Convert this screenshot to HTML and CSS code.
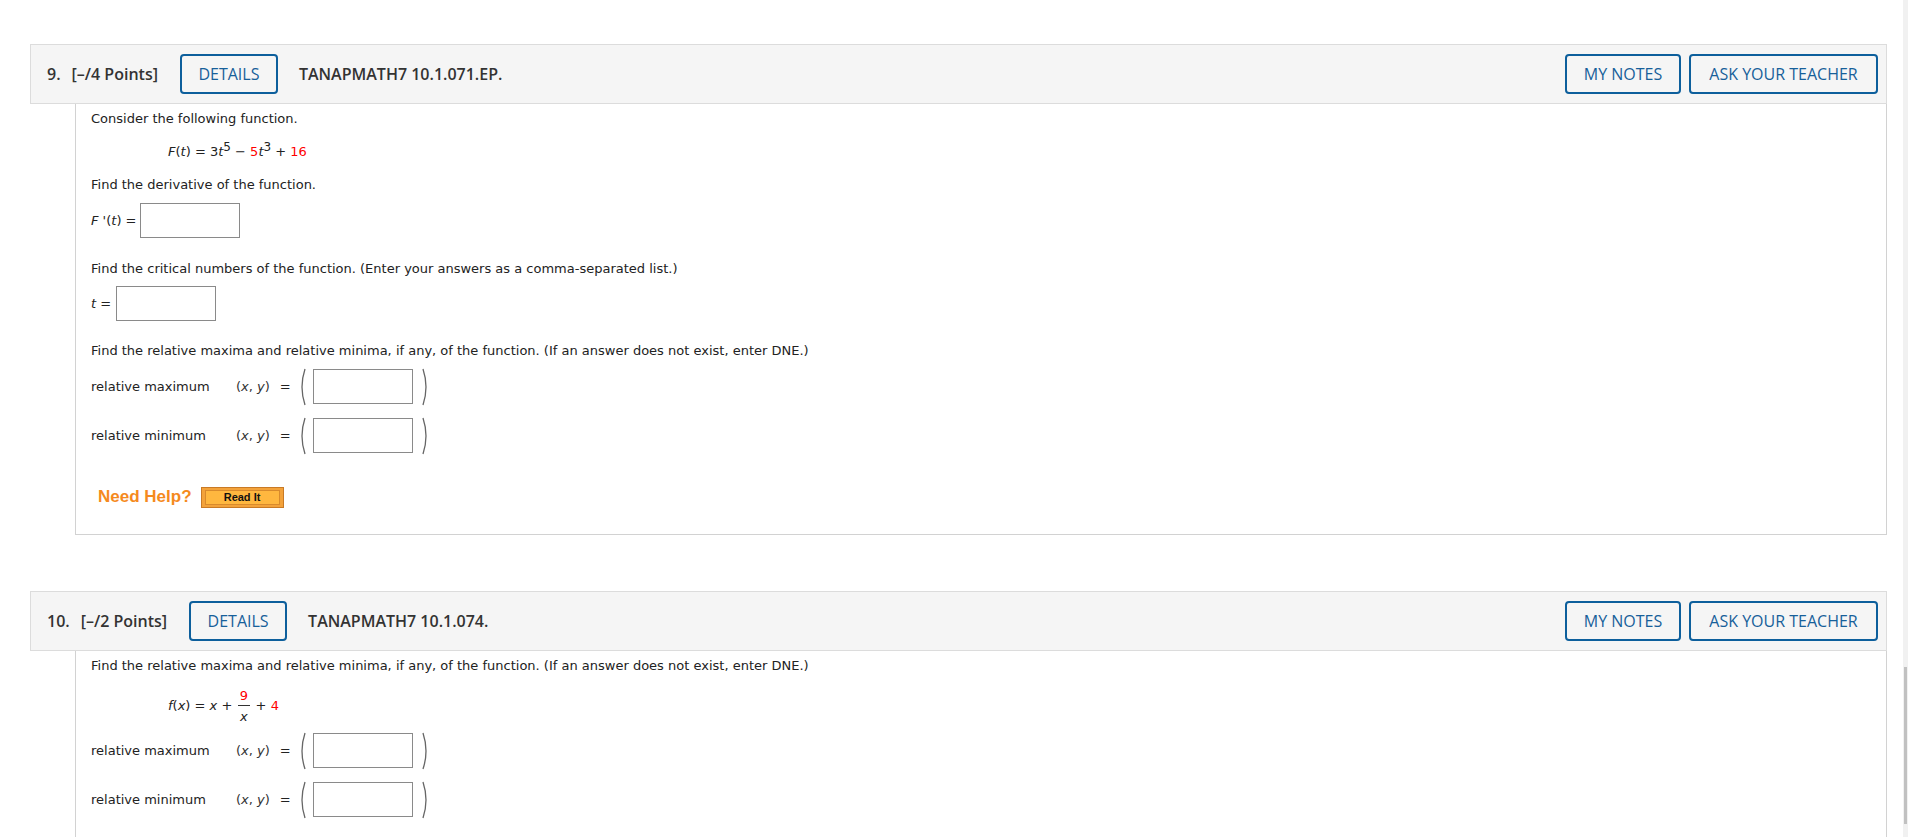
FILE: index.html
```html
<!DOCTYPE html>
<html>
<head>
<meta charset="utf-8">
<title>Questions</title>
<link rel="stylesheet" href="styles.css">
</head>
<body>
<div class="page">
  <section class="question">
    <div class="qhead">
      <span class="qnum">9.</span>
      <span class="qpts">[–/4 Points]</span>
      <button class="btn btn-details">DETAILS</button>
      <span class="qcode">TANAPMATH7 10.1.071.EP.</span>
      <span class="spacer"></span>
      <button class="btn btn-notes">MY NOTES</button>
      <button class="btn btn-ask">ASK YOUR TEACHER</button>
    </div>
    <div class="qbody">
      <p class="txt first">Consider the following function.</p>
      <div class="formula"><i>F</i>(<i>t</i>) = 3<i>t</i><sup>5</sup> − <span class="red">5</span><i>t</i><sup>3</sup> + <span class="red">16</span></div>
      <p class="txt gap13">Find the derivative of the function.</p>
      <div class="ans gap8"><span class="lbl lbl-fp"><i>F</i> '(<i>t</i>) =</span><span class="box"></span></div>
      <p class="txt gap21">Find the critical numbers of the function. (Enter your answers as a comma-separated list.)</p>
      <div class="ans gap7"><span class="lbl lbl-t"><i>t</i> =</span><span class="box"></span></div>
      <p class="txt gap20">Find the relative maxima and relative minima, if any, of the function. (If an answer does not exist, enter DNE.)</p>
      <div class="pair gap8">
        <span class="plabel">relative maximum</span>
        <span class="xy">(<i>x</i>, <i>y</i>)</span><span class="eq">=</span>
        <svg class="paren lp" viewBox="0 0 9 38"><path d="M7 1 Q1 19 7 37"/></svg>
        <span class="box"></span>
        <svg class="paren rp" viewBox="0 0 9 38"><path d="M2 1 Q8 19 2 37"/></svg>
      </div>
      <div class="pair gap14">
        <span class="plabel">relative minimum</span>
        <span class="xy">(<i>x</i>, <i>y</i>)</span><span class="eq">=</span>
        <svg class="paren lp" viewBox="0 0 9 38"><path d="M7 1 Q1 19 7 37"/></svg>
        <span class="box"></span>
        <svg class="paren rp" viewBox="0 0 9 38"><path d="M2 1 Q8 19 2 37"/></svg>
      </div>
      <div class="help">
        <span class="need">Need Help?</span>
        <span class="readit"><span class="readit-in">Read It</span></span>
      </div>
    </div>
  </section>

  <section class="question">
    <div class="qhead">
      <span class="qnum">10.</span>
      <span class="qpts">[–/2 Points]</span>
      <button class="btn btn-details">DETAILS</button>
      <span class="qcode">TANAPMATH7 10.1.074.</span>
      <span class="spacer"></span>
      <button class="btn btn-notes">MY NOTES</button>
      <button class="btn btn-ask">ASK YOUR TEACHER</button>
    </div>
    <div class="qbody">
      <p class="txt first">Find the relative maxima and relative minima, if any, of the function. (If an answer does not exist, enter DNE.)</p>
      <div class="formula fformula">
        <span class="seg"><i>f</i>(<i>x</i>) = <i>x</i> + </span>
        <span class="frac"><span class="num red">9</span><span class="bar"></span><span class="den"><i>x</i></span></span>
        <span class="seg"> + <span class="red">4</span></span>
      </div>
      <div class="pair gap10">
        <span class="plabel">relative maximum</span>
        <span class="xy">(<i>x</i>, <i>y</i>)</span><span class="eq">=</span>
        <svg class="paren lp" viewBox="0 0 9 38"><path d="M7 1 Q1 19 7 37"/></svg>
        <span class="box"></span>
        <svg class="paren rp" viewBox="0 0 9 38"><path d="M2 1 Q8 19 2 37"/></svg>
      </div>
      <div class="pair gap14">
        <span class="plabel">relative minimum</span>
        <span class="xy">(<i>x</i>, <i>y</i>)</span><span class="eq">=</span>
        <svg class="paren lp" viewBox="0 0 9 38"><path d="M7 1 Q1 19 7 37"/></svg>
        <span class="box"></span>
        <svg class="paren rp" viewBox="0 0 9 38"><path d="M2 1 Q8 19 2 37"/></svg>
      </div>
      <div class="tail"></div>
    </div>
  </section>
</div>
<div class="scrollbar"><div class="thumb"></div></div>
</body>
</html>
```

FILE: styles.css
```css
* { box-sizing: border-box; }

html, body {
  margin: 0;
  padding: 0;
  background: #fff;
  overflow: hidden;
}

body {
  font-family: "DejaVu Sans", Verdana, sans-serif;
  font-size: 13px;
  color: #222;
}

.page {
  padding: 44px 21px 0 30px;
}

.question + .question {
  margin-top: 56px;
}

/* ---------- header ---------- */
.qhead {
  display: flex;
  align-items: center;
  height: 60px;
  padding: 0 8px 0 16px;
  background: #f5f5f5;
  border: 1px solid #dcdcdc;
  font-family: "Open Sans", sans-serif;
  font-weight: 600;
  font-size: 16px;
  color: #333;
}

.qnum { margin-right: 11px; }
.qpts { margin-right: 22px; }
.qcode { margin-left: 21px; }
.spacer { flex: 1; }

.btn {
  height: 40px;
  padding: 0;
  background: transparent;
  border: 2px solid #0d5f9c;
  border-radius: 4px;
  color: #17609a;
  font-family: "Open Sans", sans-serif;
  font-size: 16px;
  font-weight: 400;
  text-align: center;
}
.btn-details { width: 98px; }
.btn-notes { width: 116px; }
.btn-ask { width: 189px; margin-left: 8px; }

/* ---------- body ---------- */
.qbody {
  margin-left: 45px;
  border: 1px solid #d2d2d2;
  border-top: none;
  padding: 5px 16px 26px 15px;
}

.txt {
  margin: 0;
  line-height: 20px;
}
.gap7 { margin-top: 7px; }
.gap8 { margin-top: 8px; }
.gap10 { margin-top: 10px; }
.gap13 { margin-top: 13px; }
.gap14 { margin-top: 14px; }
.gap20 { margin-top: 20px; }
.gap21 { margin-top: 21px; }

.red { color: #f00; }

.formula {
  margin: 13px 0 0 77px;
  line-height: 20px;
}
.formula sup {
  font-size: 12px;
  line-height: 0;
  vertical-align: 5px;
}

.fformula {
  display: flex;
  align-items: center;
  height: 35px;
  margin-top: 12px;
}
.seg { white-space: pre; }
.frac {
  display: flex;
  flex-direction: column;
  align-items: center;
  width: 13px;
  margin: 0 1px;
}
.num, .den {
  line-height: 15px;
  height: 15px;
}
.bar {
  width: 12px;
  height: 1px;
  background: #333;
  margin: 2px 0 3px;
}

.ans {
  display: flex;
  align-items: center;
  height: 35px;
}
.lbl { white-space: nowrap; }
.lbl-fp { width: 49px; }
.lbl-t { width: 25px; }

.box {
  display: block;
  width: 100px;
  height: 35px;
  border: 1px solid #8a8a8a;
  background: #fff;
}

.pair {
  display: flex;
  align-items: center;
  height: 35px;
}
.plabel { width: 145px; }
.xy { color: #333; }
.eq { margin-left: 10px; }
.paren {
  width: 9px;
  height: 38px;
  flex: none;
}
.paren path {
  fill: none;
  stroke: #666;
  stroke-width: 1.3;
}
.lp { margin: 0 6px 0 7px; }
.rp { margin-left: 8px; }

/* ---------- help ---------- */
.help {
  display: flex;
  align-items: center;
  height: 22px;
  margin: 33px 0 0 7px;
}
.need {
  font-family: "Liberation Sans", Arial, sans-serif;
  font-weight: bold;
  font-size: 17px;
  color: #f58a1e;
  margin-right: 9px;
}
.readit {
  display: block;
  width: 83px;
  height: 21px;
  padding: 2px 3px;
  border: 1px solid #c97a25;
  background: #f3a23a;
}
.readit-in {
  display: flex;
  align-items: center;
  justify-content: center;
  height: 100%;
  border: 1px solid #d88a2c;
  background: #ffb73f;
  font-family: "Liberation Sans", Arial, sans-serif;
  font-weight: bold;
  font-size: 11px;
  color: #111;
}

.tail { height: 60px; }

/* ---------- page scrollbar ---------- */
.scrollbar {
  position: fixed;
  top: 0;
  right: 0;
  width: 5px;
  height: 100%;
  background: #f1f1f1;
}
.thumb {
  position: absolute;
  top: 667px;
  left: 1px;
  width: 3px;
  height: 157px;
  background: #c1c1c1;
}
```
